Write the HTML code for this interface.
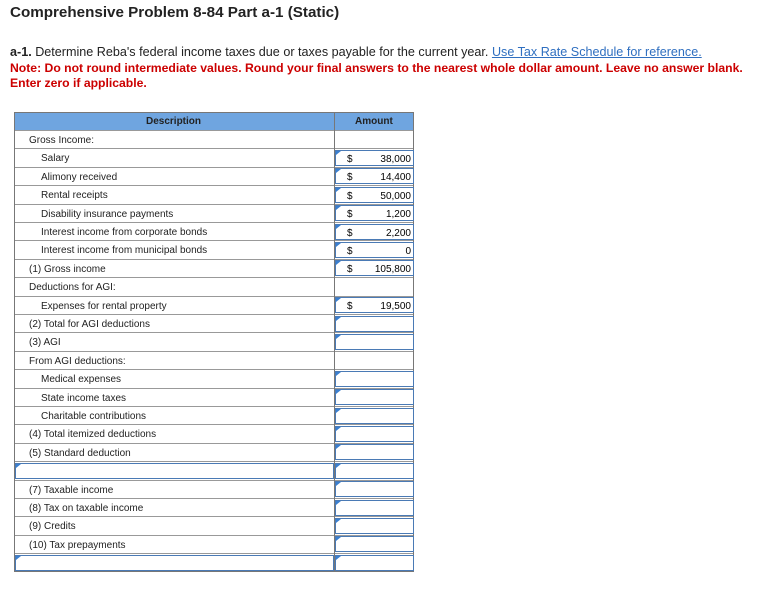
<!DOCTYPE html>
<html><head><style>
body{margin:0;width:768px;height:592px;background:#fff;font-family:"Liberation Sans",Arial,sans-serif;position:relative;overflow:hidden}
.a{position:absolute}
.t{left:10px;top:4px;font-size:15.2px;font-weight:bold;color:#222}
.p{left:10px;font-size:12.6px;color:#222;white-space:nowrap}
.red{color:#c00;font-weight:bold;font-size:12.2px}
a{color:#2f6fc0;text-decoration:underline}
#tb{left:14px;top:112px;width:400px;height:460px;border:1px solid #777;box-sizing:border-box}
.hd{left:15px;top:113px;width:398px;height:17px;background:#6fa5e0}
.vl{left:334px;top:113px;width:1px;height:458px;background:#777}
.hl{left:15px;width:398px;height:1px;background:#999}
.d{font-size:10px;color:#222;white-space:nowrap}
.in{left:335px;width:79px;height:16px;border:1px solid #4a7ab5;box-sizing:border-box}
.in:before,.di:before{content:"";position:absolute;left:0;top:0;border-left:5px solid #3a7fd0;border-bottom:4px solid transparent}
.di{left:15px;width:319px;height:16px;border:1px solid #4a7ab5;box-sizing:border-box}
.dl{position:absolute;left:11px;top:2px;font-size:10px}
.v{position:absolute;right:2px;top:2px;font-size:10px}
</style></head><body>
<div class="a t">Comprehensive Problem 8-84 Part a-1 (Static)</div>
<div class="a p" style="top:45px"><b>a-1.</b> Determine Reba's federal income taxes due or taxes payable for the current year. <a>Use Tax Rate Schedule for reference.</a></div>
<div class="a p red" style="top:61px">Note: Do not round intermediate values. Round your final answers to the nearest whole dollar amount. Leave no answer blank.</div>
<div class="a p red" style="top:76px">Enter zero if applicable.</div>
<div class="a" id="tb"></div>
<div class="a hd"></div>
<div class="a d" style="left:146px;top:116px;font-weight:bold">Description</div>
<div class="a d" style="left:355px;top:116px;font-weight:bold">Amount</div>
<div id="rows"></div>
<div class="a vl"></div>
<script>
var R=[["Gross Income:",0,0],["Salary",1,"38,000"],["Alimony received",1,"14,400"],["Rental receipts",1,"50,000"],["Disability insurance payments",1,"1,200"],["Interest income from corporate bonds",1,"2,200"],["Interest income from municipal bonds",1,"0"],["(1) Gross income",0,"105,800"],["Deductions for AGI:",0,0],["Expenses for rental property",1,"19,500"],["(2) Total for AGI deductions",0,""],["(3) AGI",0,""],["From AGI deductions:",0,0],["Medical expenses",1,""],["State income taxes",1,""],["Charitable contributions",1,""],["(4) Total itemized deductions",0,""],["(5) Standard deduction",0,""],[null,0,""],["(7) Taxable income",0,""],["(8) Tax on taxable income",0,""],["(9) Credits",0,""],["(10) Tax prepayments",0,""],[null,0,""]];
var h="";
for(var i=0;i<R.length;i++){var y=130+i*18.4;var r=R[i];
h+='<div class="a hl" style="top:'+Math.round(y)+'px"></div>';
if(r[0]===null){h+='<div class="a di" style="top:'+Math.round(y+1.5)+'px"></div>';}
else h+='<div class="a d" style="left:'+(r[1]?41:29)+'px;top:'+Math.round(y+5)+'px">'+r[0]+'</div>';
if(r[2]!==0){h+='<div class="a in" style="top:'+Math.round(y+1.5)+'px">'+(r[2]?'<span class="dl" style="top:3px">$</span><span class="v" style="top:3px">'+r[2]+'</span>':'')+'</div>';}
}
document.getElementById("rows").innerHTML=h;
</script>
</body></html>
